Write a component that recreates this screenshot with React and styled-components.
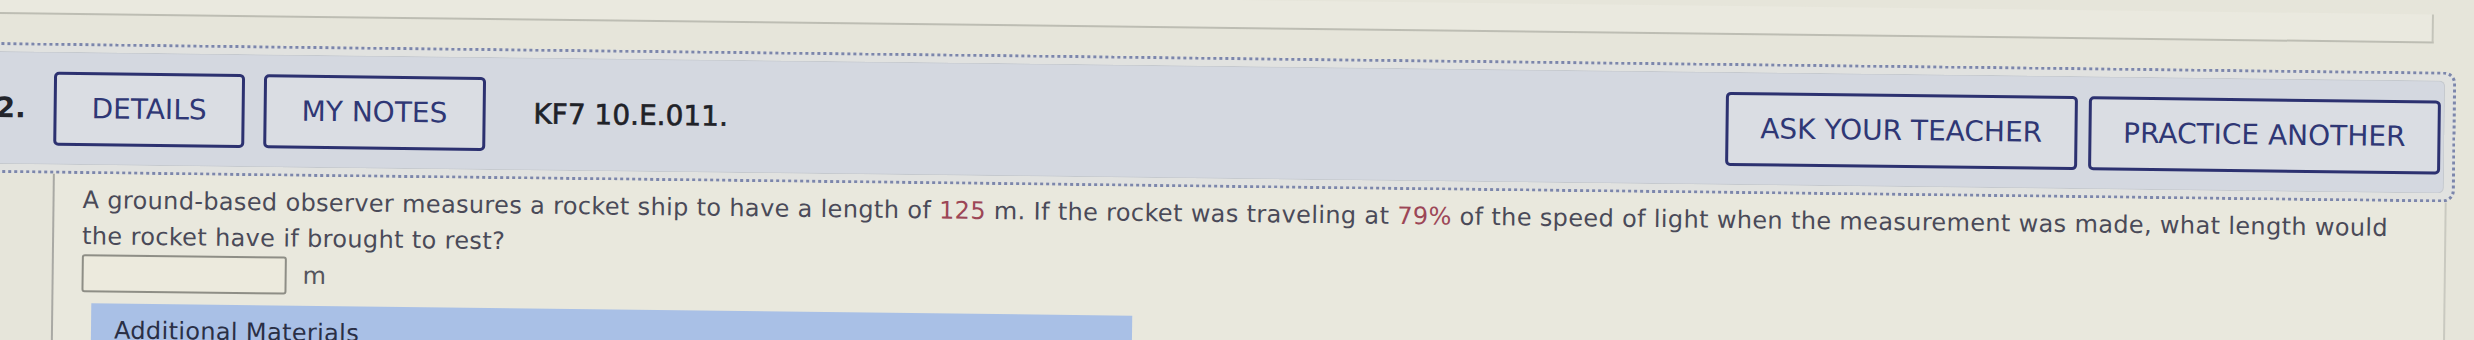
import React from 'react'
import styled, { createGlobalStyle } from 'styled-components'

const GlobalStyle = createGlobalStyle`
    html, body {
        margin: 0;
        padding: 0;
        background: #e6e5da;
    }
    body {
        font-family: 'DejaVu Sans', Verdana, sans-serif;
    }
`;

function App() {
    return (
        <Viewport>
            <GlobalStyle />
            <Page>
                <PrevCard />
                <Header>
                    <HeaderInner>
                        <Number>2.</Number>
                        <Group>
                            <ActionButton>DETAILS</ActionButton>
                            <ActionButton>MY NOTES</ActionButton>
                        </Group>
                        <Code>KF7 10.E.011.</Code>
                        <Group $right>
                            <ActionButton $narrow>ASK YOUR TEACHER</ActionButton>
                            <ActionButton $narrow>PRACTICE ANOTHER</ActionButton>
                        </Group>
                    </HeaderInner>
                </Header>
                <Body>
                    <Question>
                        A ground-based observer measures a rocket ship to have a length of <Given>125</Given> m. If the rocket was traveling at <Given>79%</Given> of the speed of light when the measurement was made, what length would the rocket have if brought to rest?
                    </Question>
                    <AnswerRow>
                        <AnswerBox type="text" />
                        <Unit>m</Unit>
                    </AnswerRow>
                    <Materials>Additional Materials</Materials>
                </Body>
            </Page>
        </Viewport>
    )
}

export default App

const Viewport = styled.div`
    width: 2474px;
    height: 340px;
    overflow: hidden;
    background: #e6e5da;
`;

// the photo is taken slightly tilted, so the whole sheet is turned a little
const Page = styled.div`
    width: 2474px;
    height: 340px;
    transform: rotate(0.69deg);
    transform-origin: 1237px 170px;
`;

const PrevCard = styled.div`
    height: 27px;
    margin-left: -60px;
    width: 2490px;
    border-bottom: 2px solid #bdbdb3;
    border-right: 2px solid #c4c4ba;
    background: #eae9df;
`;

const Header = styled.div`
    margin: 28px 0 0 -60px;
    width: 2515px;
    box-sizing: border-box;
    height: 131px;
    padding: 6px 8px 6px 0;
    border: 3px dotted #7c86ab;
    border-left: none;
    border-radius: 0 12px 12px 0;
    background: #e1e2e0;
`;

const HeaderInner = styled.div`
    height: 100%;
    box-sizing: border-box;
    display: flex;
    align-items: center;
    padding: 0 3px 0 55px;
    background: #d4d8e0;
    border: 1px solid #c5c9ce;
    border-left: none;
    border-radius: 0 6px 6px 0;
`;

const Number = styled.span`
    font-size: 28px;
    font-weight: bold;
    color: #23252b;
    width: 58px;
`;

const Group = styled.div`
    display: flex;
    gap: ${props => props.$right ? '11px' : '19px'};
    margin-left: ${props => props.$right ? 'auto' : '0'};
`;

const ActionButton = styled.button`
    height: 74px;
    padding: 0 ${props => props.$narrow ? '32px' : '35px'};
    background: #dadde3;
    border: 3px solid #2c3170;
    border-radius: 5px;
    font-family: 'DejaVu Sans', Verdana, sans-serif;
    font-size: 28px;
    color: #2f3775;
    cursor: pointer;
`;

const Code = styled.span`
    margin-left: 48px;
    font-size: 28px;
    color: #1f2228;
    -webkit-text-stroke: 0.6px #1f2228;
`;

const Body = styled.div`
    margin-left: 53px;
    width: 2394px;
    box-sizing: border-box;
    height: 200px;
    padding: 8px 40px 0 28px;
    border-left: 2px solid #a9a9a4;
    border-right: 2px solid #c9c9c0;
    background: #e9e8dd;
`;

const Question = styled.p`
    margin: 0;
    font-size: 24px;
    letter-spacing: 0.35px;
    line-height: 36px;
    color: #4a4a58;
`;

const Given = styled.span`
    color: #9c4656;
`;

const AnswerRow = styled.div`
    display: flex;
    align-items: center;
    gap: 16px;
`;

const AnswerBox = styled.input`
    width: 205px;
    height: 38px;
    box-sizing: border-box;
    margin: 0;
    border: 2px solid #8e8e86;
    border-radius: 3px;
    background: #eceadd;
`;

const Unit = styled.span`
    font-size: 24px;
    color: #55555e;
`;

const Materials = styled.div`
    margin: 11px 0 0 10px;
    width: 1041px;
    height: 60px;
    box-sizing: border-box;
    padding: 13px 0 0 23px;
    background: #a9c0e6;
    font-size: 24px;
    letter-spacing: 0.35px;
    color: #2a2f45;
`;
